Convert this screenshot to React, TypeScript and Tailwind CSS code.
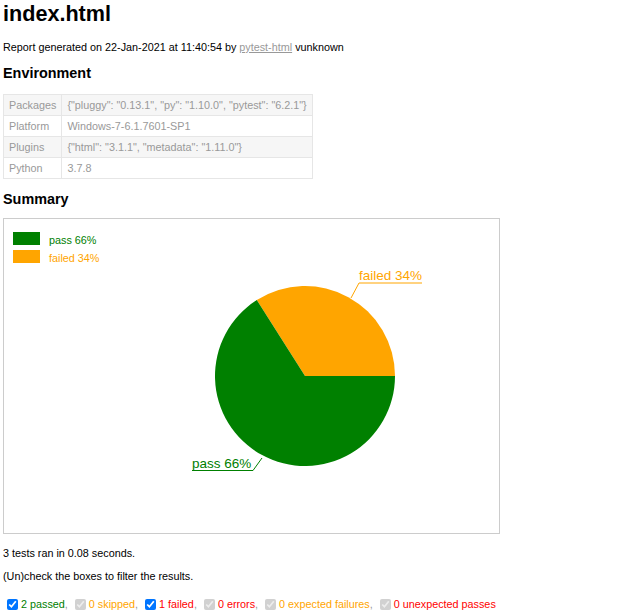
const env: [string, string][] = [
  ["Packages", '{"pluggy": "0.13.1", "py": "1.10.0", "pytest": "6.2.1"}'],
  ["Platform", "Windows-7-6.1.7601-SP1"],
  ["Plugins", '{"html": "3.1.1", "metadata": "1.11.0"}'],
  ["Python", "3.7.8"],
];

const filters = [
  { label: "2 passed", color: "text-[#008000]", enabled: true },
  { label: "0 skipped", color: "text-[#ffa500]", enabled: false },
  { label: "1 failed", color: "text-[#ff0000]", enabled: true },
  { label: "0 errors", color: "text-[#ff0000]", enabled: false },
  { label: "0 expected failures", color: "text-[#ffa500]", enabled: false },
  { label: "0 unexpected passes", color: "text-[#ff0000]", enabled: false },
];

function PieChart() {
  // center and radius inside the chart box
  const cx = 301;
  const cy = 157;
  const r = 90;
  const a = (0.34 * 360 * Math.PI) / 180;
  const ex = cx + r * Math.cos(a);
  const ey = cy - r * Math.sin(a);

  return (
    <svg width="495" height="314" viewBox="0 0 495 314" className="block">
      {/* legend */}
      <rect x="9" y="13" width="27" height="13" fill="#008000" />
      <text x="45" y="24.5" fontSize="10.8" fill="#008000" fontFamily="'Liberation Sans', Arial, sans-serif">
        pass 66%
      </text>
      <rect x="9" y="31" width="27" height="13" fill="#ffa500" />
      <text x="45" y="42.5" fontSize="10.8" fill="#ffa500" fontFamily="'Liberation Sans', Arial, sans-serif">
        failed 34%
      </text>

      {/* slices */}
      <path d={`M ${cx} ${cy} L ${cx + r} ${cy} A ${r} ${r} 0 0 0 ${ex} ${ey} Z`} fill="#ffa500" />
      <path d={`M ${cx} ${cy} L ${ex} ${ey} A ${r} ${r} 0 1 0 ${cx + r} ${cy} Z`} fill="#008000" />

      {/* labels */}
      <path d="M 347 79 L 355 64 L 418 64" stroke="#ffa500" strokeWidth="1" fill="none" />
      <text x="355" y="61" fontSize="13.5" fill="#ffa500" fontFamily="'Liberation Sans', Arial, sans-serif">
        failed 34%
      </text>
      <path d="M 258 239 L 249 251.5 L 188 251.5" stroke="#008000" strokeWidth="1" fill="none" />
      <text x="188" y="249" fontSize="13.5" fill="#008000" fontFamily="'Liberation Sans', Arial, sans-serif">
        pass 66%
      </text>
    </svg>
  );
}

export default function App() {
  return (
    <div className="min-h-[610px] bg-white pl-[3px] font-['Liberation_Sans',Arial,sans-serif] text-[10.8px] leading-[14px] text-[#999]">
      <h1 className="pt-[1px] text-[21.6px] leading-[26px] font-bold text-black">index.html</h1>
      <p className="mt-[13px] text-black">
        Report generated on 22-Jan-2021 at 11:40:54 by{" "}
        <a href="#" className="text-[#999] underline">
          pytest-html
        </a>{" "}
        vunknown
      </p>

      <h2 className="mt-[10px] text-[14.4px] leading-[18px] font-bold text-black">Environment</h2>
      <table className="mt-[12px] border-collapse">
        <tbody>
          {env.map(([k, v], i) => (
            <tr key={k} className={i % 2 === 0 ? "bg-[#f6f6f6]" : ""}>
              <td className="border border-[#e6e6e6] px-[5px] py-[3px]">{k}</td>
              <td className="border border-[#e6e6e6] px-[5px] py-[3px]">{v}</td>
            </tr>
          ))}
        </tbody>
      </table>

      <h2 className="mt-[11px] text-[14.4px] leading-[18px] font-bold text-black">Summary</h2>
      <div className="mt-[10px] w-[497px] h-[316px] border border-[#cccccc]">
        <PieChart />
      </div>

      <p className="mt-[12px] text-black">3 tests ran in 0.08 seconds.</p>
      <p className="mt-[9px] text-black">(Un)check the boxes to filter the results.</p>

      <div className="mt-[14px] flex items-center">
        {filters.map((f, i) => (
          <span key={f.label} className="flex items-center">
            <input
              type="checkbox"
              defaultChecked
              disabled={!f.enabled}
              className="ml-[4px] mr-[3px] w-[11px] h-[11px] accent-[#0075ff]"
            />
            <span className={f.color}>{f.label}</span>
            {i < filters.length - 1 && <span className="whitespace-pre">, </span>}
          </span>
        ))}
      </div>
    </div>
  );
}
